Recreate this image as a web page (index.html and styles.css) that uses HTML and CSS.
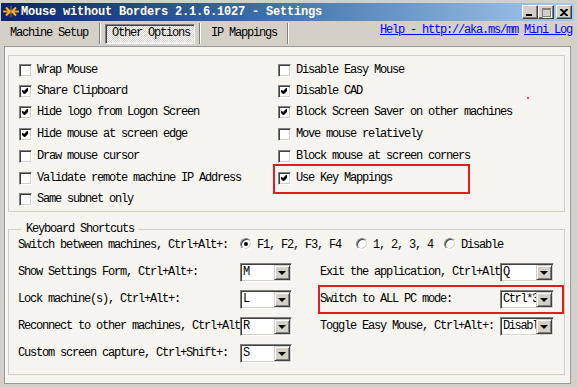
FILE: index.html
```html
<!DOCTYPE html>
<html>
<head>
<meta charset="utf-8">
<title>Mouse without Borders - Settings</title>
<link rel="stylesheet" href="styles.css">
</head>
<body>
<div class="window">
  <div class="titlebar">
    <svg class="app-icon" viewBox="0 0 16 14" aria-hidden="true">
      <path d="M0 6.5 H16" stroke="#f0a020" stroke-width="2"/>
      <path d="M3 2.5 L7 6.5 L3 10.5" fill="none" stroke="#f7b330" stroke-width="2"/>
      <path d="M13 2.5 L9 6.5 L13 10.5" fill="none" stroke="#f7b330" stroke-width="2"/>
      <path d="M8 1 V12" stroke="#c07010" stroke-width="1"/>
    </svg>
    <span class="title">Mouse without Borders 2.1.6.1027 - Settings</span>
    <div class="caption-buttons">
      <span class="cbtn cbtn-min"><i class="glyph-min"></i></span>
      <span class="cbtn cbtn-max"><i class="glyph-max"></i></span>
      <span class="cbtn cbtn-close">
        <svg viewBox="0 0 8 7" class="glyph-close" aria-hidden="true">
          <path d="M0 0h2l2 2 2-2h2v1l-3 2.5 3 2.5v1h-2l-2-2-2 2h-2v-1l3-2.5-3-2.5z" fill="#000"/>
        </svg>
      </span>
    </div>
  </div>

  <div class="tabrow">
    <span class="tab tab-first">Machine Setup</span>
    <span class="sep sep-1"></span>
    <span class="tab tab-active">Other Options</span>
    <span class="sep sep-2"></span>
    <span class="tab tab-third">IP Mappings</span>
    <span class="sep sep-3"></span>
    <span class="links"><a class="link">Help - http://aka.ms/mm</a> <a class="link">Mini Log</a></span>
  </div>

  <div class="panel">
    <div class="options">
      <label class="check"><span class="box"></span>Wrap Mouse</label>
      <label class="check"><span class="box checked"></span>Share Clipboard</label>
      <label class="check"><span class="box checked"></span>Hide logo from Logon Screen</label>
      <label class="check"><span class="box checked"></span>Hide mouse at screen edge</label>
      <label class="check"><span class="box"></span>Draw mouse cursor</label>
      <label class="check"><span class="box"></span>Validate remote machine IP Address</label>
      <label class="check"><span class="box"></span>Same subnet only</label>

      <label class="check"><span class="box"></span>Disable Easy Mouse</label>
      <label class="check"><span class="box checked"></span>Disable CAD</label>
      <label class="check"><span class="box checked"></span>Block Screen Saver on other machines</label>
      <label class="check"><span class="box"></span>Move mouse relatively</label>
      <label class="check"><span class="box"></span>Block mouse at screen corners</label>
      <label class="check"><span class="box checked"></span>Use Key Mappings<span class="highlight hl-keymap"></span></label>
      <span class="red-dot"></span>
    </div>

    <fieldset class="shortcuts">
      <legend class="legend">Keyboard Shortcuts</legend>
      <div class="shortcut-grid">
        <div class="switch-row">
          <span class="label switch-label">Switch between machines, Ctrl+Alt+:</span>
          <span class="radio-item ri-1"><span class="radio on"></span>F1, F2, F3, F4</span>
          <span class="radio-item ri-2"><span class="radio"></span>1, 2, 3, 4</span>
          <span class="radio-item"><span class="radio"></span>Disable</span>
        </div>

        <span class="label">Show Settings Form, Ctrl+Alt+:</span>
        <span class="combo"><span class="combo-text">M</span><span class="combo-btn"></span></span>
        <span class="label rlabel">Exit the application, Ctrl+Alt</span>
        <span class="combo wide"><span class="combo-text">Q</span><span class="combo-btn"></span></span>

        <span class="label">Lock machine(s), Ctrl+Alt+:</span>
        <span class="combo"><span class="combo-text">L</span><span class="combo-btn"></span></span>
        <span class="label rlabel">Switch to ALL PC mode:<span class="highlight hl-allpc"></span></span>
        <span class="combo wide"><span class="combo-text">Ctrl*3</span><span class="combo-btn"></span></span>

        <span class="label">Reconnect to other machines, Ctrl+Alt</span>
        <span class="combo"><span class="combo-text">R</span><span class="combo-btn"></span></span>
        <span class="label rlabel">Toggle Easy Mouse, Ctrl+Alt+:</span>
        <span class="combo wide"><span class="combo-text">Disabl</span><span class="combo-btn"></span></span>

        <span class="label">Custom screen capture, Ctrl+Shift+:</span>
        <span class="combo"><span class="combo-text">S</span><span class="combo-btn"></span></span>
      </div>
    </fieldset>
  </div>
</div>
</body>
</html>
```

FILE: styles.css
```css
* { box-sizing: border-box; }
html, body { margin: 0; padding: 0; }
body {
  width: 577px;
  height: 387px;
  overflow: hidden;
  background: #d4d0c8;
  font-family: "Liberation Mono", "DejaVu Sans Mono", monospace;
  font-size: 12px;
  letter-spacing: -1.2px;
  line-height: 13px;
  color: #000;
}

.window {
  height: 387px;
  display: flex;
  flex-direction: column;
  padding: 3px 3px 3px 1px;
}

/* title bar */
.titlebar {
  height: 18px;
  flex: none;
  display: flex;
  align-items: center;
  background: linear-gradient(to right, #0a246a 0%, #3a6ea5 45%, #a6caf0 100%);
  color: #fff;
}
.app-icon { width: 16px; height: 14px; margin-left: 2px; flex: none; }
.title {
  margin-left: 2px;
  font-weight: bold;
  font-size: 12px;
  letter-spacing: -0.2px;
  white-space: nowrap;
}
.caption-buttons { margin-left: auto; margin-right: 2px; display: flex; }
.cbtn {
  width: 16px;
  height: 14px;
  background: #d4d0c8;
  border: 1px solid;
  border-color: #fff #404040 #404040 #fff;
  box-shadow: inset -1px -1px #808080;
  position: relative;
  display: flex;
  align-items: center;
  justify-content: center;
}
.cbtn-close { margin-left: 2px; }
.glyph-min {
  display: block;
  width: 6px;
  height: 2px;
  background: #000;
  margin-top: 6px;
  margin-right: 2px;
}
.glyph-max {
  display: block;
  width: 9px;
  height: 9px;
  border: 1px solid #808080;
  border-top-width: 2px;
  box-shadow: 1px 1px #fff;
}
.glyph-close { width: 8px; height: 7px; display: block; }

/* tab row */
.tabrow {
  height: 25px;
  flex: none;
  display: flex;
  align-items: center;
  white-space: nowrap;
}
.tab-first { margin-left: 9px; }
.sep {
  width: 2px;
  height: 21px;
  border-left: 1px solid #808080;
  border-right: 1px solid #fff;
  flex: none;
}
.sep-1 { margin-left: 11px; }
.tab-active {
  margin-left: 4px;
  width: 90px;
  height: 20px;
  padding-left: 6px;
  display: flex;
  align-items: center;
  border: 1px solid;
  border-color: #808080 #fff #fff #808080;
  box-shadow: inset 1px 1px #404040;
  background: repeating-conic-gradient(#fff 0 25%, #d4d0c8 0 50%) 0 0 / 2px 2px;
}
.sep-2 { margin-left: 4px; }
.tab-third { margin-left: 10px; }
.sep-3 { margin-left: 10px; }
.links {
  margin-left: auto;
  margin-right: 2px;
  align-self: flex-start;
  margin-top: 3px;
}
.link { color: #0000ff; text-decoration: underline; }

/* panel */
.panel {
  flex: 1;
  margin: 0 3px;
  border: 1px solid #919b9c;
  background: #f5f4ef;
  padding: 8px 5px 0 3px;
  display: flex;
  flex-direction: column;
}

.options {
  position: relative;
  border: 1px solid #d0d0bf;
  padding: 4px 0 1px 10px;
  display: grid;
  grid-template-columns: 259px 1fr;
  grid-template-rows: 21px 21px 21px 22px 22px 22px 21px;
  grid-auto-flow: column;
}
.check {
  display: flex;
  align-items: center;
  gap: 5px;
  position: relative;
  white-space: nowrap;
}
.box {
  width: 13px;
  height: 13px;
  flex: none;
  background: #fff;
  border: 1px solid;
  border-color: #808080 #fff #fff #808080;
  box-shadow: inset 1px 1px #404040, inset -1px -1px #d4d0c8;
}
.box.checked {
  background:
    url("data:image/svg+xml,%3Csvg xmlns='http://www.w3.org/2000/svg' viewBox='0 0 11 11'%3E%3Cpath d='M2 4h1l1 1 3-3h1v3l-3 3h-1l-2-2z' fill='%23000'/%3E%3C/svg%3E") center / 11px 11px no-repeat,
    #fff;
}
.highlight {
  position: absolute;
  border: 2px solid #e31b23;
  pointer-events: none;
}
.hl-keymap { left: -5px; top: -3px; width: 197px; height: 30px; }
.red-dot {
  position: absolute;
  left: 518px;
  top: 41px;
  width: 2px;
  height: 2px;
  background: #f04050;
}

/* keyboard shortcuts */
.shortcuts {
  margin: 10px 0 0;
  padding: 0;
  border: 1px solid #d0d0bf;
  min-width: 0;
}
.legend {
  margin-left: 13px;
  padding: 0 4px;
  line-height: 14px;
}
.shortcut-grid {
  display: grid;
  grid-template-columns: 222px 52px 28px 180px 54px;
  grid-template-rows: 23px repeat(4, 27px);
  align-items: center;
  padding: 0 0 7px 9px;
}
.label { white-space: nowrap; position: relative; }
.rlabel { grid-column: 4; }
.switch-row {
  grid-column: 1 / -1;
  align-self: start;
  height: 18px;
  display: flex;
  align-items: center;
  white-space: nowrap;
}
.switch-label { width: 222px; flex: none; }
.radio-item { display: flex; align-items: center; gap: 5px; }
.ri-1 { width: 116px; }
.ri-2 { width: 88px; }
.radio {
  width: 12px;
  height: 12px;
  flex: none;
  border-radius: 50%;
  border: 1px solid;
  border-color: #808080 #fff #fff #808080;
  background: #fff;
  box-shadow: inset 1px 1px #404040, inset -1px -1px #d4d0c8;
  position: relative;
  margin-top: -3px;
}
.radio.on::after {
  content: "";
  position: absolute;
  left: 3px;
  top: 3px;
  width: 4px;
  height: 4px;
  border-radius: 50%;
  background: #000;
}
.hl-allpc { left: -2px; top: -8px; width: 246px; height: 29px; }

.combo {
  width: 52px;
  height: 19px;
  display: flex;
  align-items: center;
  background: #fff;
  border: 1px solid;
  border-color: #808080 #fff #fff #808080;
  box-shadow: inset 1px 1px #404040, inset -1px -1px #d4d0c8;
  padding: 1px;
}
.combo.wide { width: 54px; }
.combo-text {
  flex: 1;
  white-space: nowrap;
  padding-left: 1px;
  min-width: 0;
  letter-spacing: -1.4px;
}
.combo-btn {
  width: 16px;
  height: 15px;
  flex: none;
  position: relative;
  z-index: 1;
  background: #d4d0c8;
  border: 1px solid;
  border-color: #d4d0c8 #404040 #404040 #d4d0c8;
  box-shadow: inset 1px 1px #fff, inset -1px -1px #808080;
  display: flex;
  align-items: center;
  justify-content: center;
}
.combo-btn::after {
  content: "";
  width: 0;
  height: 0;
  border-left: 4px solid transparent;
  border-right: 4px solid transparent;
  border-top: 4px solid #000;
}
```
